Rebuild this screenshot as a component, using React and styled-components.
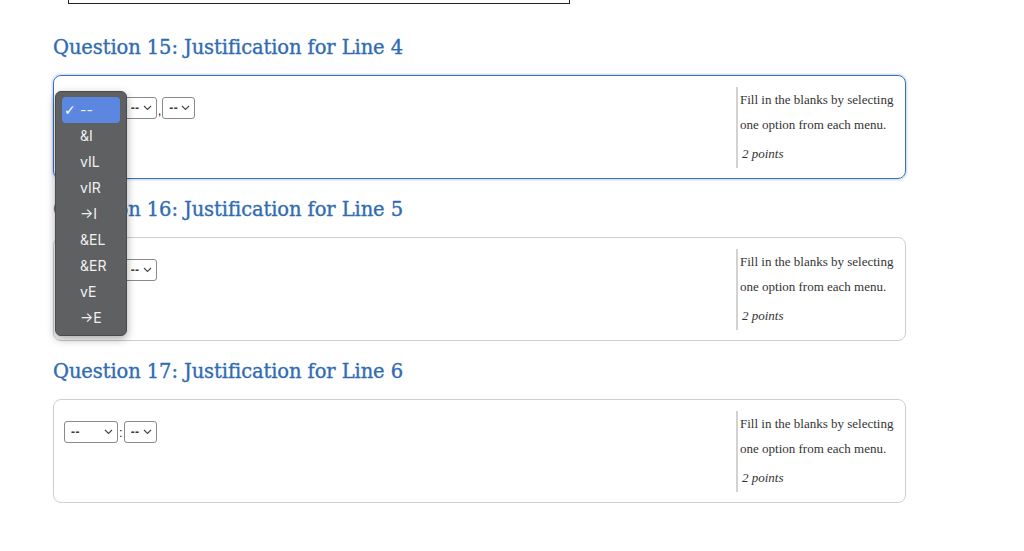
import React from "react";
import styled, { createGlobalStyle } from "styled-components";

const Global = createGlobalStyle`
  html, body { margin: 0; padding: 0; background: #fff; }
  body { font-family: "Liberation Serif", serif; }
`;

const Page = styled.div`
  position: relative;
  width: 1024px;
  height: 551px;
  overflow: hidden;
  padding-left: 53px;
  box-sizing: border-box;
`;

const TopBox = styled.div`
  margin-left: 15px;
  width: 500px;
  height: 3px;
  border: 1px solid #222;
  border-top: none;
`;

const Section = styled.section`
  width: 853px;
  margin-bottom: 13px;
`;

const Heading = styled.h2`
  margin: 0;
  padding-top: ${p => (p.$first ? "30px" : "4px")};
  height: 41px;
  font-family: "DejaVu Serif", serif;
  font-weight: 400;
  font-size: 19.5px;
  line-height: 28px;
  color: #2f6cb2;
  letter-spacing: -0.1px;
  -webkit-text-stroke: 0.35px #2f6cb2;
`;

const Card = styled.div`
  box-sizing: border-box;
  height: 104px;
  border: 1px solid ${p => (p.$active ? "#3a73bd" : "#cfcfcf")};
  border-radius: 8px;
  box-shadow: ${p => (p.$active ? "0 0 3px rgba(58,115,189,0.6)" : "none")};
  display: flex;
  justify-content: space-between;
  padding: 10px 5px 0 10px;
`;

const Blanks = styled.div`
  display: flex;
  align-items: center;
  height: 22px;
  margin-top: 11px;
  font-family: "Liberation Sans", sans-serif;
  font-size: 13px;
  color: #222;
`;

const Sep = styled.span`
  padding: 0 1px;
  font-size: 13px;
  line-height: 1;
  align-self: ${p => (p.$low ? "flex-end" : "center")};
  margin-bottom: ${p => (p.$low ? "2px" : "0")};
`;

const SelectBox = styled.span`
  box-sizing: border-box;
  display: inline-flex;
  align-items: center;
  justify-content: space-between;
  width: ${p => p.$w}px;
  height: 22px;
  padding: 0 4px 0 6px;
  border: 1px solid #8a8a8a;
  border-radius: 3px;
  background: #fff;
  font-family: "Liberation Sans", sans-serif;
  font-weight: 700;
  font-size: 12px;
  color: #3a3a3a;
  letter-spacing: 0.5px;
`;

const Info = styled.div`
  width: 160px;
  height: 81px;
  margin-top: 1px;
  border-left: 2px solid #d2d2d2;
  padding-left: 2px;
  font-family: "Liberation Serif", serif;
  font-size: 13px;
  color: #333;
`;

const InfoLine = styled.div`
  line-height: 25px;
`;

const Points = styled.div`
  margin-top: 9px;
  padding-left: 2px;
  font-style: italic;
  font-size: 13px;
  line-height: 16px;
`;

const Menu = styled.ul`
  position: absolute;
  left: 55px;
  top: 91px;
  width: 72px;
  height: 245px;
  box-sizing: border-box;
  margin: 0;
  padding: 5px 6px;
  list-style: none;
  background: #5f6062;
  border: 1px solid #4a4b4d;
  border-radius: 6px;
  box-shadow: 0 3px 8px rgba(0, 0, 0, 0.35);
  font-family: "Inter", "Liberation Sans", sans-serif;
  font-size: 14px;
  color: #f0f0f0;
`;

const MenuItem = styled.li`
  position: relative;
  height: 26px;
  line-height: 26px;
  padding-left: 18px;
  border-radius: 4px;
  background: ${p => (p.$selected ? "#5b87e0" : "transparent")};
`;

const Check = styled.span`
  position: absolute;
  left: 2px;
  top: 0;
  font-family: "DejaVu Sans", sans-serif;
  font-size: 14px;
  font-weight: 700;
  color: #fff;
`;

const Chevron = () => (
  <svg width="9" height="6" viewBox="0 0 9 6" fill="none">
    <path d="M1 1l3.5 3.5L8 1" stroke="#444" strokeWidth="1.1" />
  </svg>
);

const Select = ({ w }) => (
  <SelectBox $w={w}>
    <span>--</span>
    <Chevron />
  </SelectBox>
);

const InfoPanel = () => (
  <Info>
    <InfoLine>Fill in the blanks by selecting</InfoLine>
    <InfoLine>one option from each menu.</InfoLine>
    <Points>2 points</Points>
  </Info>
);

const options = ["--", "&I", "vIL", "vIR", "→I", "&EL", "&ER", "vE", "→E"];

export default function App() {
  return (
    <Page>
      <Global />
      <TopBox />
      <Section>
        <Heading $first>Question 15: Justification for Line 4</Heading>
        <Card $active>
          <Blanks>
            <Select w={54} />
            <Sep>:</Sep>
            <Select w={33} />
            <Sep $low>,</Sep>
            <Select w={33} />
          </Blanks>
          <InfoPanel />
        </Card>
      </Section>
      <Section>
        <Heading>Question 16: Justification for Line 5</Heading>
        <Card>
          <Blanks>
            <Select w={54} />
            <Sep>:</Sep>
            <Select w={33} />
          </Blanks>
          <InfoPanel />
        </Card>
      </Section>
      <Section>
        <Heading>Question 17: Justification for Line 6</Heading>
        <Card>
          <Blanks>
            <Select w={54} />
            <Sep>:</Sep>
            <Select w={33} />
          </Blanks>
          <InfoPanel />
        </Card>
      </Section>
      <Menu>
        {options.map((o, i) => (
          <MenuItem key={o} $selected={i === 0}>
            {i === 0 && <Check>✓</Check>}
            {o}
          </MenuItem>
        ))}
      </Menu>
    </Page>
  );
}
